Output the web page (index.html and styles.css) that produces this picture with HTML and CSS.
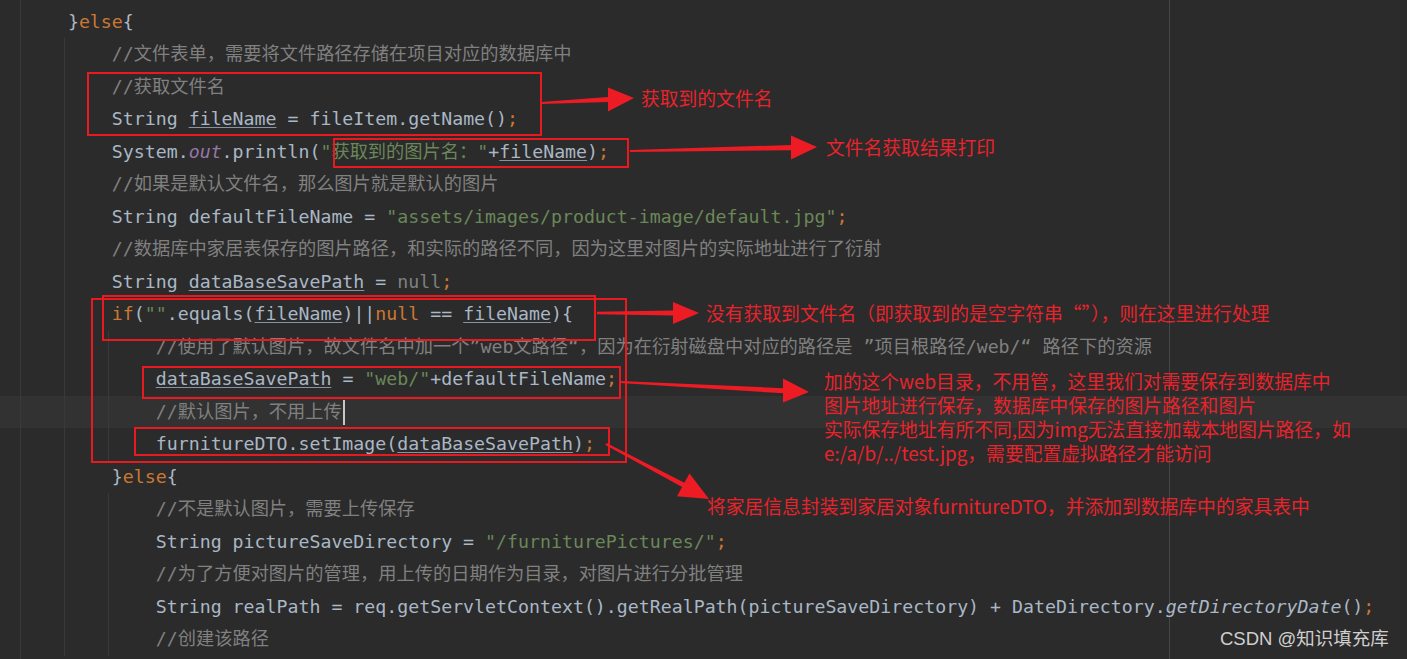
FILE: index.html
```html
<!DOCTYPE html>
<html lang="zh-CN">
<head>
<meta charset="utf-8">
<title>Code annotation</title>
<link rel="stylesheet" href="styles.css">
</head>
<body>
<div class="editor">
  <div class="line">    }<span class="kw">else</span>{</div>
  <div class="block">
    <div class="line cm">        //文件表单，需要将文件路径存储在项目对应的数据库中</div>
    <div class="line cm">        //获取文件名</div>
    <div class="line">        String <span class="re">fileName</span> = fileItem.getName()<span class="kw">;</span></div>
    <div class="line">        System.<span class="fld">out</span>.println(<span class="str">"获取到的图片名："</span>+<span class="re">fileName</span>)<span class="kw">;</span></div>
    <div class="line cm">        //如果是默认文件名，那么图片就是默认的图片</div>
    <div class="line">        String defaultFileName = <span class="str">"assets/images/product-image/default.jpg"</span><span class="kw">;</span></div>
    <div class="line cm">        //数据库中家居表保存的图片路径，和实际的路径不同，因为这里对图片的实际地址进行了衍射</div>
    <div class="line">        String <span class="re">dataBaseSavePath</span> = <span class="dim">null</span><span class="kw">;</span></div>
    <div class="line">        <span class="kw">if</span>(<span class="str">""</span>.equals(<span class="re">fileName</span>)||<span class="kw">null</span> == <span class="re">fileName</span>){</div>
    <div class="block inner">
      <div class="line cm">            //使用了默认图片，故文件名中加一个”web文路径“，因为在衍射磁盘中对应的路径是 ”项目根路径/web/“ 路径下的资源</div>
      <div class="line">            <span class="re">dataBaseSavePath</span> = <span class="str">"web/"</span>+defaultFileName<span class="kw">;</span></div>
      <div class="line cm current">            //默认图片，不用上传<span class="caret"></span></div>
      <div class="line">            furnitureDTO.setImage(<span class="re">dataBaseSavePath</span>)<span class="kw">;</span></div>
    </div>
    <div class="line">        }<span class="kw">else</span>{</div>
    <div class="block inner">
      <div class="line cm">            //不是默认图片，需要上传保存</div>
      <div class="line">            String pictureSaveDirectory = <span class="str">"/furniturePictures/"</span><span class="kw">;</span></div>
      <div class="line cm">            //为了方便对图片的管理，用上传的日期作为目录，对图片进行分批管理</div>
      <div class="line">            String realPath = req.getServletContext().getRealPath(pictureSaveDirectory) + DateDirectory.<span class="it">getDirectoryDate</span>()<span class="kw">;</span></div>
      <div class="line cm">            //创建该路径</div>
    </div>
  </div>
</div>

<svg class="overlay" width="1407" height="659" viewBox="0 0 1407 659" xmlns="http://www.w3.org/2000/svg">
  <g fill="none" stroke="#e8191f" stroke-width="2">
    <rect x="88" y="73" width="453" height="62"/>
    <rect x="334" y="139" width="294" height="28"/>
    <rect x="103" y="296" width="492" height="44"/>
    <rect x="92" y="299" width="534" height="163"/>
    <rect x="143" y="367" width="477" height="31"/>
    <rect x="135" y="428" width="474" height="27"/>
  </g>
  <g fill="#ed1c24">
    <polygon points="541,102 608,97 608,87.4 634,98 608,111.4 608,102 541,104"/>
    <polygon points="630,150 791,145 791,135.6 817,147 791,159.6 791,150.2 630,152"/>
    <polygon points="597,311.8 673,310.5 673,302 699,313 673,324 673,315.5 597,314.2"/>
    <polygon points="620,381 783,388.2 783,378.6 809,392 783,402.6 783,393.2 620,383"/>
    <polygon points="606.5,443.1 684.4,482.7 689.5,473.5 709,499 677,496.3 682.1,487.1 605.5,444.9"/>
  </g>
</svg>

<div class="note n1">获取到的文件名</div>
<div class="note n2">文件名获取结果打印</div>
<div class="note n3">没有获取到文件名（即获取到的是空字符串“”），则在这里进行处理</div>
<div class="note n4">
  <div class="note-line">加的这个web目录，不用管，这里我们对需要保存到数据库中</div>
  <div class="note-line">图片地址进行保存，数据库中保存的图片路径和图片</div>
  <div class="note-line">实际保存地址有所不同,因为img无法直接加载本地图片路径，如</div>
  <div class="note-line">e:/a/b/../test.jpg，需要配置虚拟路径才能访问</div>
</div>
<div class="note n5">将家居信息封装到家居对象furnitureDTO，并添加到数据库中的家具表中</div>
<div class="watermark">CSDN @知识填充库</div>
</body>
</html>
```

FILE: styles.css
```css
html, body {
  margin: 0;
  padding: 0;
  background: #2b2b2b;
}

body {
  width: 1407px;
  height: 659px;
  overflow: hidden;
  position: relative;
}

.editor {
  height: 659px;
  box-sizing: border-box;
  padding-top: 5.5px;
  background:
    linear-gradient(#393939, #393939) 20px 0 / 1px 100% no-repeat,
    linear-gradient(#464646, #464646) 1169px 0 / 1px 100% no-repeat,
    #2b2b2b;
  font-family: "DejaVu Sans Mono", "Noto Sans CJK SC", monospace;
  font-size: 18.24px;
  color: #a9b7c6;
}

.line {
  height: 32.5px;
  line-height: 32.5px;
  padding-left: 24px;
  white-space: pre;
}

.block {
  background: linear-gradient(#393939, #393939) 64px 0 / 1px 100% no-repeat;
}

.block.inner {
  background-position: 108px 0;
}

.current {
  background:
    linear-gradient(#393939, #393939) 20px 0 / 1px 100% no-repeat,
    linear-gradient(#393939, #393939) 64px 0 / 1px 100% no-repeat,
    linear-gradient(#393939, #393939) 108px 0 / 1px 100% no-repeat,
    linear-gradient(#464646, #464646) 1169px 0 / 1px 100% no-repeat,
    #323232;
}

.caret {
  display: inline-block;
  width: 0;
  height: 25px;
  border-left: 2px solid #c8c8c8;
  vertical-align: middle;
  margin-left: 1px;
}

.kw { color: #cc7832; }
.str { color: #6a8759; }
.cm { color: #808080; }
.dim { color: #808080; }
.fld { color: #9876aa; font-style: italic; }
.it { font-style: italic; }
.re {
  text-decoration: underline;
  text-decoration-color: #8593a3;
  text-decoration-thickness: 1px;
  text-underline-offset: 1.5px;
}

.overlay {
  position: absolute;
  left: 0;
  top: 0;
  pointer-events: none;
}

.note {
  position: absolute;
  font-family: "Noto Sans CJK SC", sans-serif;
  font-size: 18.8px;
  line-height: 24px;
  color: #e8232b;
  white-space: nowrap;
}

.note-line {
  height: 24px;
}

.n1 { left: 641px; top: 86px; }
.n2 { left: 826px; top: 135px; }
.n3 { left: 706px; top: 301px; }
.n4 { left: 824px; top: 369px; }
.n5 { left: 707px; top: 494px; }

.watermark {
  position: absolute;
  left: 1220px;
  top: 627px;
  font-family: "Liberation Sans", "Noto Sans CJK SC", sans-serif;
  font-size: 18.5px;
  line-height: 24px;
  color: #cfcfcf;
  white-space: nowrap;
}
```
